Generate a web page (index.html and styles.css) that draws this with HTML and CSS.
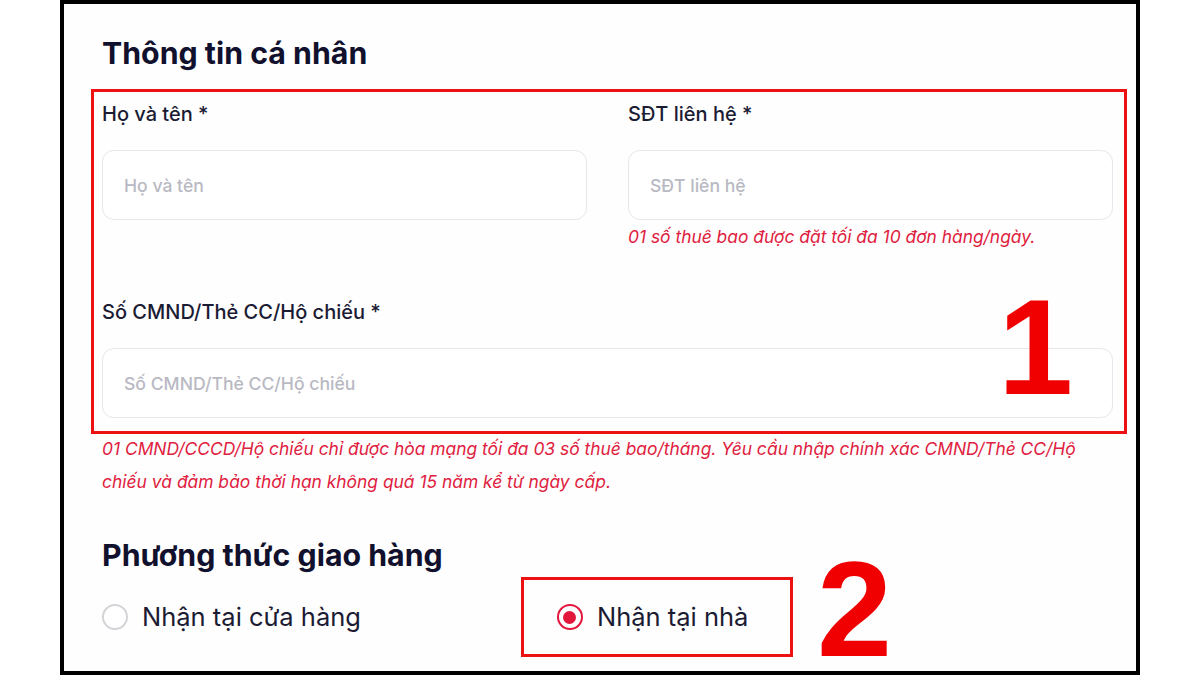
FILE: index.html
```html
<!DOCTYPE html>
<html lang="vi">
<head>
<meta charset="utf-8">
<title>Thông tin cá nhân</title>
<link rel="stylesheet" href="styles.css">
</head>
<body>
<div class="frame">
  <h2 class="heading">Thông tin cá nhân</h2>
  <div class="mark-box">
    <div class="row">
      <div class="field">
        <label class="label">Họ và tên *</label>
        <input class="input" type="text" placeholder="Họ và tên">
      </div>
      <div class="field">
        <label class="label">SĐT liên hệ *</label>
        <input class="input" type="text" placeholder="SĐT liên hệ">
        <p class="hint">01 số thuê bao được đặt tối đa 10 đơn hàng/ngày.</p>
      </div>
    </div>
    <div class="field field-full">
      <label class="label">Số CMND/Thẻ CC/Hộ chiếu *</label>
      <input class="input" type="text" placeholder="Số CMND/Thẻ CC/Hộ chiếu">
    </div>
  </div>
  <p class="hint hint-long">01 CMND/CCCD/Hộ chiếu chỉ được hòa mạng tối đa 03 số thuê bao/tháng. Yêu cầu nhập chính xác CMND/Thẻ CC/Hộ chiếu và đảm bảo thời hạn không quá 15 năm kể từ ngày cấp.</p>
  <h2 class="heading heading-2">Phương thức giao hàng</h2>
  <div class="options">
    <div class="option">
      <span class="radio"></span>
      <span class="option-text">Nhận tại cửa hàng</span>
    </div>
    <div class="option option-marked">
      <span class="radio radio-on"></span>
      <span class="option-text">Nhận tại nhà</span>
    </div>
  </div>
  <span class="num num-1">1</span>
  <span class="num num-2">2</span>
</div>
</body>
</html>
```

FILE: styles.css
```css
* { box-sizing: border-box; }
html, body { margin: 0; padding: 0; background: #ffffff; }
body {
  font-family: Inter, Roboto, "Noto Sans", sans-serif;
  color: #161630;
  width: 1200px;
  height: 675px;
  overflow: hidden;
}
.frame {
  position: relative;
  margin-left: 60px;
  width: 1080px;
  height: 675px;
  border: 4px solid #000;
  background: #fefefe;
  padding: 31px 9px 0 27px;
}
.heading {
  margin: 0 0 0 11px;
  font-size: 30.3px;
  line-height: 36px;
  font-weight: 700;
  color: #11112e;
}
.mark-box {
  margin-top: 18px;
  border: 3px solid #ee1111;
  padding: 10px 11px 13px 8px;
}
.row {
  display: grid;
  grid-template-columns: 485px 485px;
  column-gap: 41px;
}
.field { display: flex; flex-direction: column; }
.field-full { margin-top: 47px; }
.row .field:first-child { padding-bottom: 32px; }
.label {
  font-size: 20px;
  line-height: 24px;
  font-weight: 500;
  color: #1b1b33;
}
.input {
  margin-top: 24px;
  height: 70px;
  width: 100%;
  border: 1px solid #e6e6ec;
  border-radius: 12px;
  padding: 0 21px;
  font-family: Inter, Roboto, "Noto Sans", sans-serif;
  font-size: 17.6px;
  font-weight: 500;
  color: #1b1b33;
  background: #fff;
  outline: none;
}
.input::placeholder { color: #b9b9c3; }
.hint {
  margin: 1px 0 0 0;
  font-size: 17.4px;
  line-height: 32px;
  font-style: italic;
  color: #e0213e;
}
.hint-long {
  margin: -2px 0 0 11px;
  width: 1000px;
  line-height: 33px;
}
.heading-2 { margin-top: 39px; }
.options {
  display: flex;
  align-items: center;
  margin-top: 4px;
  margin-left: 11px;
}
.option {
  display: flex;
  align-items: center;
  gap: 14px;
}
.option-marked {
  margin-left: 160px;
  width: 272px;
  height: 80px;
  border: 3px solid #ee1111;
  padding-left: 33px;
  gap: 14px;
}
.radio {
  width: 26px;
  height: 26px;
  border-radius: 50%;
  border: 2px solid #d4d4d8;
  background: #fff;
  flex: none;
  display: flex;
  align-items: center;
  justify-content: center;
}
.radio-on { border: 2.5px solid #e3163c; }
.radio-on::after {
  content: "";
  width: 13px;
  height: 13px;
  border-radius: 50%;
  background: #e3163c;
}
.option-text {
  font-size: 25.5px;
  line-height: 30px;
  color: #1b1b33;
}
.num {
  position: absolute;
  font-family: "Liberation Sans", Arial, sans-serif;
  font-weight: 700;
  font-size: 135px;
  line-height: 100px;
  color: #f00000;
}
.num-1 { left: 934px; top: 294px; }
.num-2 { left: 753px; top: 556px; }
```
